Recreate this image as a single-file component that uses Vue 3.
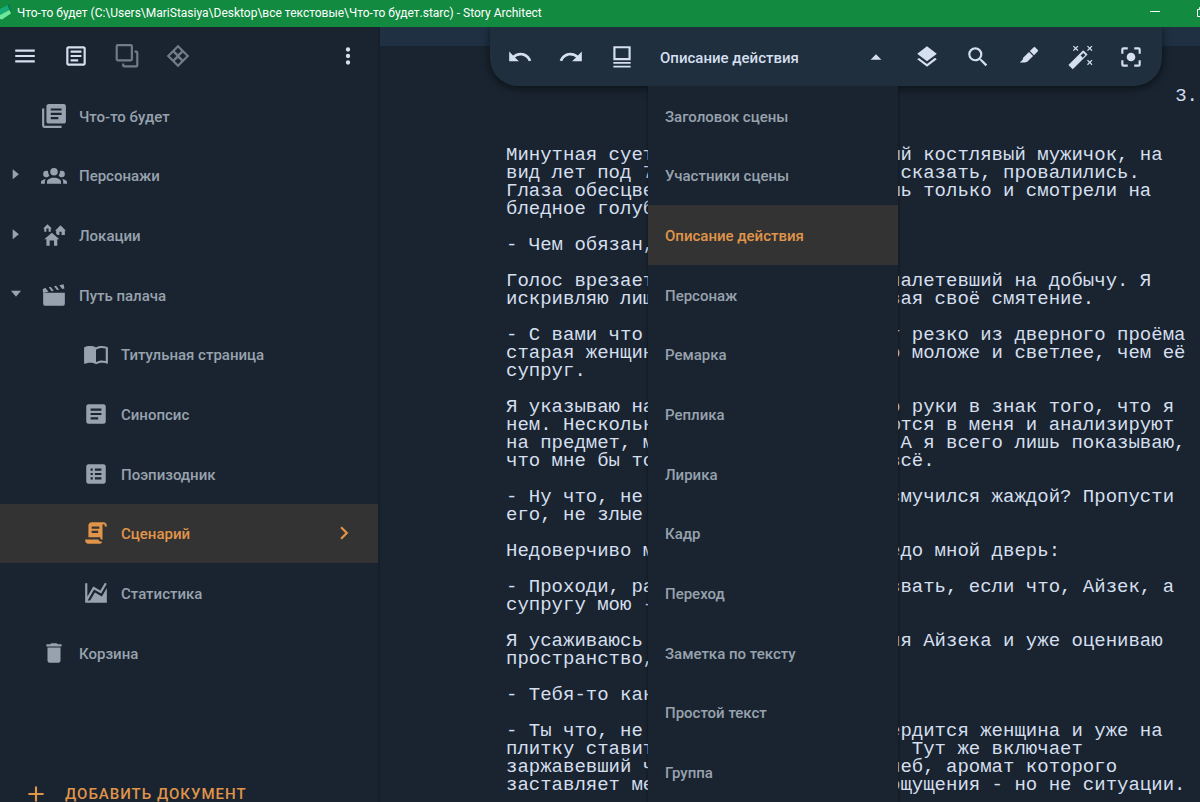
<script setup>
const icons = {
  menu: 'M3,6H21V8H3V6M3,11H21V13H3V11M3,16H21V18H3V16Z',
  docOutline: 'M5,3C3.89,3 3,3.89 3,5V19C3,20.11 3.89,21 5,21H19C20.11,21 21,20.11 21,19V5C21,3.89 20.11,3 19,3H5M5,5H19V19H5V5M7,7V9H17V7H7M7,11V13H17V11H7M7,15V17H14V15H7Z',
  cards: 'M3.5,1H15.5A2,2 0 0,1 17.5,3V15A2,2 0 0,1 15.5,17H3.5A2,2 0 0,1 1.5,15V3A2,2 0 0,1 3.5,1M3.5,3V15H15.5V3H3.5M19,7H20.5A2,2 0 0,1 22.5,9V20.5A2,2 0 0,1 20.5,22.5H9.5A2,2 0 0,1 7.5,20.5V19H9.5V20.5H20.5V9H19V7Z',
  diamond: 'M12,1.6L22.4,12L12,22.4L1.6,12L12,1.6M12,4.4L9.1,7.3L12,10.2L14.9,7.3L12,4.4M7.5,8.9L4.4,12L7.5,15.1L10.6,12L7.5,8.9M16.5,8.9L13.4,12L16.5,15.1L19.6,12L16.5,8.9M12,13.8L9.1,16.7L12,19.6L14.9,16.7L12,13.8Z',
  dots: 'M12,16A2,2 0 0,1 14,18A2,2 0 0,1 12,20A2,2 0 0,1 10,18A2,2 0 0,1 12,16M12,10A2,2 0 0,1 14,12A2,2 0 0,1 12,14A2,2 0 0,1 10,12A2,2 0 0,1 12,10M12,4A2,2 0 0,1 14,6A2,2 0 0,1 12,8A2,2 0 0,1 10,6A2,2 0 0,1 12,4Z',
  project: 'M16,15H9V13H16V15M19,11H9V9H19V11M19,7H9V5H19V7M3,5V21H19V23H3A2,2 0 0,1 1,21V5H3M21,1A2,2 0 0,1 23,3V17C23,18.11 22.11,19 21,19H7A2,2 0 0,1 5,17V3C5,1.89 5.89,1 7,1H21',
  people: 'M12,5.5A3.5,3.5 0 0,1 15.5,9A3.5,3.5 0 0,1 12,12.5A3.5,3.5 0 0,1 8.5,9A3.5,3.5 0 0,1 12,5.5M5,8C5.56,8 6.08,8.15 6.53,8.42C6.38,9.85 6.8,11.27 7.66,12.38C7.16,13.34 6.16,14 5,14A3,3 0 0,1 2,11A3,3 0 0,1 5,8M19,8A3,3 0 0,1 22,11A3,3 0 0,1 19,14C17.84,14 16.84,13.34 16.34,12.38C17.2,11.27 17.62,9.85 17.47,8.42C17.92,8.15 18.44,8 19,8M5.5,18.25C5.5,16.18 8.41,14.5 12,14.5C15.59,14.5 18.5,16.18 18.5,18.25V20H5.5V18.25M0,20V18.5C0,17.11 1.89,15.94 4.45,15.6C3.86,16.28 3.5,17.22 3.5,18.25V20H0M24,20H20.5V18.25C20.5,17.22 20.14,16.28 19.55,15.6C22.11,15.94 24,17.11 24,18.5V20Z',
  homes: 'M17,16H15V22H12V17H8V22H5V16H3L10,10L17,16M6,2L10,6H9V9H7V6H5V9H3V6H2L6,2M18,3L23,8H22V12H19V9H17V12H15.34L14,10.87V8H13L18,3Z',
  movie: 'M20.84,2.18L16.91,2.96L19.65,6.5L21.62,6.1L20.84,2.18M13.97,3.54L12,3.93L14.75,7.46L16.71,7.07L13.97,3.54M9.07,4.5L7.1,4.91L9.85,8.44L11.81,8.05L9.07,4.5M4.16,5.5L3.18,5.69A2,2 0 0,0 1.61,8.04L2,10L6.9,9.03L4.16,5.5M2,10V20A2,2 0 0,0 4,22H20A2,2 0 0,0 22,20V10H2Z',
  book: 'M21,5C19.89,4.65 18.67,4.5 17.5,4.5C15.55,4.5 13.45,4.9 12,6C10.55,4.9 8.45,4.5 6.5,4.5C4.55,4.5 2.45,4.9 1,6V20.65C1,20.9 1.25,21.15 1.5,21.15C1.6,21.15 1.65,21.1 1.75,21.1C3.1,20.45 5.05,20 6.5,20C8.45,20 10.55,20.4 12,21.5C13.35,20.65 15.8,20 17.5,20C19.15,20 20.85,20.3 22.25,21.05C22.35,21.1 22.4,21.1 22.5,21.1C22.75,21.1 23,20.85 23,20.6V6C22.4,5.55 21.75,5.25 21,5M21,18.5C19.9,18.15 18.7,18 17.5,18C15.8,18 13.35,18.65 12,19.5V8C13.35,7.15 15.8,6.5 17.5,6.5C18.7,6.5 19.9,6.65 21,7V18.5Z',
  textBox: 'M14,17H7V15H14M17,13H7V11H17M17,9H7V7H17M19,3H5C3.89,3 3,3.89 3,5V19A2,2 0 0,0 5,21H19A2,2 0 0,0 21,19V5C21,3.89 20.1,3 19,3Z',
  listBox: 'M19 3H5C3.9 3 3 3.9 3 5V19C3 20.1 3.9 21 5 21H19C20.1 21 21 20.1 21 19V5C21 3.9 20.1 3 19 3M7 7H9V9H7V7M7 11H9V13H7V11M7 15H9V17H7V15M17 17H11V15H17V17M17 13H11V11H17V13M17 9H11V7H17V9Z',
  script: 'M17.8,20C17.4,21.2 16.3,22 15,22H5C3.3,22 2,20.7 2,19V18H5L14.2,18C14.6,19.2 15.7,20 17,20H17.8M19,2C20.7,2 22,3.3 22,5V6H20V5C20,4.4 19.6,4 19,4C18.4,4 18,4.4 18,5V18H17C16.4,18 16,17.6 16,17V16H5V5C5,3.3 6.3,2 8,2H19M8,6V8H15V6H8M8,10V12H14V10H8Z',
  chart: 'M17.45,15.18L22,7.31V21H2V3H4V15.54L9.5,6L16,9.78L20.24,2.45L21.97,3.45L16.74,12.5L10.23,8.75L4.31,19H6.57L10.96,11.44L17.45,15.18Z',
  trash: 'M19,4H15.5L14.5,3H9.5L8.5,4H5V6H19M6,19A2,2 0 0,0 8,21H16A2,2 0 0,0 18,19V7H6V19Z',
  plus: 'M19,13H13V19H11V13H5V11H11V5H13V11H19V13Z',
  chevron: 'M8.59,16.58L13.17,12L8.59,7.41L10,6L16,12L10,18L8.59,16.58Z',
  right: 'M8,5L15.5,11L8,17Z',
  down: 'M6,7H18L12,14Z',
  up: 'M7,14.5L12,9.5L17,14.5H7Z',
  undo: 'M12.5,8C9.85,8 7.45,9 5.6,10.6L2,7V16H11L7.38,12.38C8.77,11.22 10.54,10.5 12.5,10.5C16.04,10.5 19.05,12.81 20.1,16L22.47,15.22C21.08,11.03 17.15,8 12.5,8Z',
  redo: 'M18.4,10.6C16.55,9 14.15,8 11.5,8C6.85,8 2.92,11.03 1.54,15.22L3.9,16C4.95,12.81 7.95,10.5 11.5,10.5C13.45,10.5 15.23,11.22 16.62,12.38L13,16H22V7L18.4,10.6Z',
  page: 'M4,2H20V15H4V2M6,4V13H18V4H6M4,16.5H20V18.3H4V16.5M4,20H20V21.8H4V20Z',
  layers: 'M12,16L19.36,10.27L21,9L12,2L3,9L4.63,10.27M12,18.54L4.62,12.81L3,14.07L12,21.07L21,14.07L19.37,12.8L12,18.54Z',
  search: 'M9.5,3A6.5,6.5 0 0,1 16,9.5C16,11.11 15.41,12.59 14.44,13.73L14.71,14H15.5L20.5,19L19,20.5L14,15.5V14.71L13.73,14.44C12.59,15.41 11.11,16 9.5,16A6.5,6.5 0 0,1 3,9.5A6.5,6.5 0 0,1 9.5,3M9.5,5C7,5 5,7 5,9.5C5,12 7,14 9.5,14C12,14 14,12 14,9.5C14,7 12,5 9.5,5Z',
  marker: 'M16.4,2.9Q17,2.3 17.6,2.9L20.2,5.5Q20.8,6.1 20.2,6.7L16.6,10.3L12.8,6.5L16.4,2.9M12,7.3L15.8,11.1L10.4,16.4Q9.8,17 9.1,16.5L8.6,17H3.5L6.5,14Q6,13.4 6.6,12.8L12,7.3Z',
  wand: 'M15.5,6.2L19,9.7L5.3,23.4L1.3,19.4L14.5,6.2Q15,5.8 15.5,6.2M15,8.2L12.6,10.6L14.6,12.6L17,10.2L15,8.2M6.3,1.5L8,3.2L9.7,1.5L10.5,2.3L8.8,4L10.5,5.7L9.7,6.5L8,4.8L6.3,6.5L5.5,5.7L7.2,4L5.5,2.3L6.3,1.5M19.3,1.5L21,3.2L22.7,1.5L23.5,2.3L21.8,4L23.5,5.7L22.7,6.5L21,4.8L19.3,6.5L18.5,5.7L20.2,4L18.5,2.3L19.3,1.5M19.3,14.5L21,16.2L22.7,14.5L23.5,15.3L21.8,17L23.5,18.7L22.7,19.5L21,17.8L19.3,19.5L18.5,18.7L20.2,17L18.5,15.3L19.3,14.5Z',
  focus: 'M12,8A4,4 0 0,1 16,12A4,4 0 0,1 12,16A4,4 0 0,1 8,12A4,4 0 0,1 12,8M5,15V19H9V21H5A2,2 0 0,1 3,19V15H5M5,5V9H3V5A2,2 0 0,1 5,3H9V5H5M19,5H15V3H19A2,2 0 0,1 21,5V9H19V5M19,19V15H21V19A2,2 0 0,1 19,21H15V19H19Z'
}

const modes = [
  { icon: 'menu', label: 'Меню' },
  { icon: 'docOutline', label: 'Документы' },
  { icon: 'cards', label: 'Карточки', dim: true },
  { icon: 'diamond', label: 'Схема', dim: true }
]

const tree = [
  { icon: 'project', label: 'Что-то будет' },
  { icon: 'people', label: 'Персонажи', arrow: 'right' },
  { icon: 'homes', label: 'Локации', arrow: 'right' },
  { icon: 'movie', label: 'Путь палача', arrow: 'down' },
  { icon: 'book', label: 'Титульная страница', child: true },
  { icon: 'textBox', label: 'Синопсис', child: true },
  { icon: 'listBox', label: 'Поэпизодник', child: true },
  { icon: 'script', label: 'Сценарий', child: true, active: true },
  { icon: 'chart', label: 'Статистика', child: true },
  { icon: 'trash', label: 'Корзина' }
]

const leftTools = [
  { icon: 'undo', label: 'Отменить' },
  { icon: 'redo', label: 'Повторить' },
  { icon: 'page', label: 'Вид страницы' }
]
const rightTools = [
  { icon: 'layers', label: 'Слои' },
  { icon: 'search', label: 'Поиск' },
  { icon: 'marker', label: 'Маркер' },
  { icon: 'wand', label: 'Автоформат' },
  { icon: 'focus', label: 'Фокус' }
]

const current = 'Описание действия'
const styles = [
  'Заголовок сцены', 'Участники сцены', 'Описание действия', 'Персонаж',
  'Ремарка', 'Реплика', 'Лирика', 'Кадр', 'Переход',
  'Заметка по тексту', 'Простой текст', 'Группа'
]

// Each line is a pair: the text before and after the open style menu.
const paragraphs = [
  [
    ['Минутная сует', 'ый костлявый мужичок, на'],
    ['вид лет под 7', ' сказать, провалились.'],
    ['Глаза обесцве', 'шь только и смотрели на'],
    ['бледное голуб', '']
  ],
  [['- Чем обязан,', '']],
  [
    ['Голос врезает', 'налетевший на добычу. Я'],
    ['искривляю лиш', 'вая своё смятение.']
  ],
  [
    ['- С вами что', 'т резко из дверного проёма'],
    ['старая женщин', 'о моложе и светлее, чем её'],
    ['супруг.', '']
  ],
  [
    ['Я указываю на', 'о руки в знак того, что я'],
    ['нем. Нескольк', 'ются в меня и анализируют'],
    ['на предмет, м', ' А я всего лишь показываю,'],
    ['что мне бы то', 'всё.']
  ],
  [
    ['- Ну что, не', 'змучился жаждой? Пропусти'],
    ['его, не злые', '']
  ],
  [['Недоверчиво м', 'едо мной дверь:']],
  [
    ['- Проходи, ра', 'звать, если что, Айзек, а'],
    ['супругу мою -', '']
  ],
  [
    ['Я усаживаюсь', 'ия Айзека и уже оцениваю'],
    ['пространство,', '']
  ],
  [['- Тебя-то как', '']],
  [
    ['- Ты что, не', 'ердится женщина и уже на'],
    ['плитку ставит', '  Тут же включает'],
    ['заржавевший ч', 'леб, аромат которого'],
    ['заставляет ме', 'ощущения - но не ситуации.']
  ]
]
</script>

<template>
  <div class="window">
    <header class="titlebar">
      <svg class="logo" viewBox="0 0 12 20" aria-hidden="true">
        <path d="M7 1L9 0L11 7L9 8Z" fill="#0b6f55" />
        <path d="M0 5L7.5 1L9.5 6L0 11Z" fill="#14ab74" />
        <path d="M0 11L9.5 6L11 9.5L2 15.5L0 15Z" fill="#6ee79a" />
      </svg>
      <h1 class="caption">Что-то будет (C:\Users\MariStasiya\Desktop\все текстовые\Что-то будет.starc) - Story Architect</h1>
      <button class="win-btn" aria-label="Свернуть">
        <svg viewBox="0 0 12 12"><path d="M1 5.5H11" stroke="currentColor" fill="none" /></svg>
      </button>
      <button class="win-btn restore" aria-label="Развернуть">
        <svg viewBox="0 0 12 12"><path d="M1.5 3.5H8.5V10.5H1.5ZM3.5 3.5V1.5H10.5V8.5H8.5" stroke="currentColor" fill="none" /></svg>
      </button>
    </header>

    <div class="body">
      <aside class="sidebar">
        <div class="modes">
          <button v-for="m in modes" :key="m.icon" class="mode" :class="{ dim: m.dim }" :aria-label="m.label">
            <svg class="icon" viewBox="0 0 24 24"><path :d="icons[m.icon]" fill-rule="evenodd" /></svg>
          </button>
          <button class="mode more" aria-label="Ещё">
            <svg class="icon" viewBox="0 0 24 24"><path :d="icons.dots" /></svg>
          </button>
        </div>

        <nav class="tree" aria-label="Структура проекта">
          <a v-for="n in tree" :key="n.label" href="#" class="node" :class="{ child: n.child, active: n.active }">
            <span class="arrow">
              <svg v-if="n.arrow" viewBox="0 0 24 24"><path :d="icons[n.arrow]" /></svg>
            </span>
            <svg class="icon" viewBox="0 0 24 24"><path :d="icons[n.icon]" fill-rule="evenodd" /></svg>
            <span class="label">{{ n.label }}</span>
            <svg v-if="n.active" class="icon" viewBox="0 0 24 24"><path :d="icons.chevron" /></svg>
          </a>
        </nav>

        <button class="add">
          <svg class="icon" viewBox="0 0 24 24"><path :d="icons.plus" /></svg>
          <span>ДОБАВИТЬ ДОКУМЕНТ</span>
        </button>
      </aside>

      <main class="editor">
        <div class="sheet-gap"></div>
        <p class="page-no">3.</p>
        <article class="script">
          <p v-for="(p, i) in paragraphs" :key="i">
            <span v-for="(line, j) in p" :key="j" class="line">
              <span>{{ line[0] }}</span><span>{{ line[1] }}</span>
            </span>
          </p>
        </article>

        <div class="toolbar" role="toolbar" aria-label="Панель редактора">
          <button v-for="t in leftTools" :key="t.icon" class="tool" :aria-label="t.label">
            <svg class="icon" viewBox="0 0 24 24"><path :d="icons[t.icon]" fill-rule="evenodd" /></svg>
          </button>
          <button class="picker" aria-haspopup="listbox" aria-expanded="true" aria-controls="style-list">
            <span class="label">{{ current }}</span>
            <svg class="icon" viewBox="0 0 24 24"><path :d="icons.up" /></svg>
          </button>
          <button v-for="t in rightTools" :key="t.icon" class="tool" :aria-label="t.label">
            <svg class="icon" viewBox="0 0 24 24"><path :d="icons[t.icon]" fill-rule="evenodd" /></svg>
          </button>
        </div>

        <ul id="style-list" class="styles" role="listbox" aria-label="Стиль абзаца">
          <li v-for="s in styles" :key="s" role="option" :aria-selected="s === current" :class="{ active: s === current }">{{ s }}</li>
        </ul>
      </main>
    </div>
  </div>
</template>

<style>
body {
  margin: 0;
  background: #192430;
}
</style>

<style scoped>
.window {
  height: 100vh;
  display: flex;
  flex-direction: column;
  overflow: hidden;
  background: #192430;
  color: #98a2ae;
  font: 500 15px/20px Roboto, "Liberation Sans", sans-serif;
}
button {
  margin: 0;
  padding: 0;
  border: 0;
  background: none;
  color: inherit;
  font: inherit;
  cursor: pointer;
}
svg {
  display: block;
  fill: currentColor;
}
.icon {
  width: 26px;
  height: 26px;
  flex: none;
}

.titlebar {
  flex: none;
  height: 27px;
  display: flex;
  align-items: center;
  overflow: hidden;
  background: #128a3f;
  color: #fff;
}
.logo {
  width: 12px;
  height: 20px;
  margin-right: 5px;
}
.caption {
  flex: 1;
  margin: 0;
  padding-bottom: 2px;
  font: 400 12px/16px Roboto, "Open Sans", sans-serif;
  white-space: nowrap;
}
.win-btn {
  width: 48px;
  display: flex;
  justify-content: center;
  padding-bottom: 4px;
}
.win-btn svg {
  width: 12px;
  height: 12px;
}
.restore {
  width: 29px;
  justify-content: flex-end;
  margin-right: -8px;
}

.body {
  flex: 1;
  min-height: 0;
  display: flex;
}
.sidebar {
  flex: none;
  width: 378px;
  display: grid;
  grid-template-rows: 59px minmax(0, 10fr) minmax(0, 2fr);
  border-right: 2px solid #15202a;
}
.modes {
  display: flex;
  align-items: center;
  gap: 25px;
  padding: 0 17px 2px 12px;
  color: #d5dfee;
}
.mode.dim {
  color: #727c87;
}
.mode.more {
  margin-left: auto;
}
.tree {
  display: grid;
  grid-auto-rows: minmax(0, 1fr);
}
.node {
  display: flex;
  align-items: center;
  gap: 12px;
  padding-right: 21px;
  color: inherit;
  text-decoration: none;
}
.arrow {
  width: 26px;
  display: flex;
  justify-content: center;
  padding-left: 3px;
}
.arrow svg {
  width: 20px;
  height: 20px;
}
.child .arrow {
  width: 68px;
}
.label {
  flex: 1;
  padding-top: 2px;
  text-align: left;
}
.active {
  background: #333;
  color: #e0954a;
}
.add {
  align-self: end;
  height: 16px;
  display: flex;
  align-items: center;
  gap: 16px;
  padding-left: 23px;
  color: #e0954a;
  letter-spacing: 1px;
}

.editor {
  flex: 1;
  min-width: 0;
  position: relative;
  color: #d5dfee;
}
.sheet-gap {
  height: 19px;
  background: #1f3043;
}
.page-no,
.script {
  font: 400 19px/18px "Liberation Mono", "Courier New", monospace;
}
.page-no {
  margin: 41px 2px 0 0;
  text-align: right;
}
.script {
  padding: 41px 0 0 126px;
}
.script p {
  margin: 0 0 18px;
}
.line {
  display: grid;
  grid-template-columns: 383px 1fr;
  height: 18px;
  white-space: pre;
}

.toolbar {
  position: absolute;
  top: 0;
  left: 110px;
  right: 38px;
  height: 59px;
  box-sizing: border-box;
  display: flex;
  padding: 0 6px 0 4px;
  border-radius: 0 0 28px 28px;
  background: #202f3e;
  box-shadow: 0 2px 8px rgba(0, 0, 0, 0.6);
  clip-path: inset(0 -20px -20px -20px);
}
.tool {
  width: 51px;
  display: flex;
  align-items: center;
  justify-content: center;
}
.picker {
  flex: 1;
  display: flex;
  align-items: center;
  padding: 0 12px 0 13px;
}
.styles {
  position: absolute;
  top: 59px;
  bottom: 0;
  left: 268px;
  width: 250px;
  margin: 0;
  padding: 0;
  display: grid;
  grid-auto-rows: minmax(0, 1fr);
  list-style: none;
  background: #192430;
  box-shadow: 0 2px 3px rgba(0, 0, 0, 0.5);
  color: #98a2ae;
}
.styles li {
  display: flex;
  align-items: center;
  padding: 2px 0 0 17px;
}
.styles .active {
  color: #e0954a;
}
</style>
